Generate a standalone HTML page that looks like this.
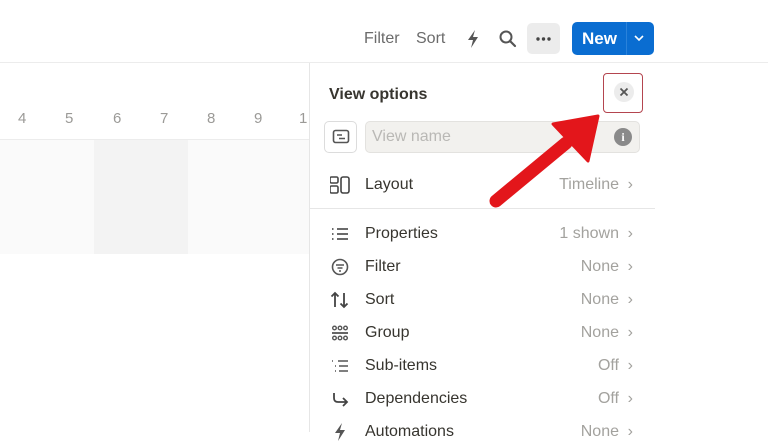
<!DOCTYPE html>
<html><head><meta charset="utf-8"><style>
*{margin:0;padding:0;box-sizing:border-box}
body{width:768px;height:432px;overflow:hidden;background:#fff;font-family:"Liberation Sans",sans-serif;position:relative;color:#37352f}
.abs{position:absolute}
.tb{font-size:16px;color:#6b6b6b;top:30px}
.row{position:absolute;left:310px;width:345px;height:33px;font-size:16px}
.row .ic{position:absolute;left:20px;top:7px;width:20px;height:20px}
.row .lb{position:absolute;left:55px;top:8px;color:#37352f}
.row .vl{position:absolute;right:36px;top:8px;color:#a3a29e}
.row .ch{position:absolute;right:22px;top:8px;color:#a3a29e}
</style></head><body>
<div class="abs" style="left:0;top:62px;width:768px;height:1px;background:#ececec"></div>
<div class="abs tb" style="left:364px">Filter</div>
<div class="abs tb" style="left:416px">Sort</div>
<svg class="abs" style="left:465px;top:29px" width="16" height="20" viewBox="0 0 16 20"><path d="M10 1 L3 11 H8 L6 19 L13 8 H8 Z" fill="#555"/></svg>
<svg class="abs" style="left:498px;top:29px" width="20" height="20" viewBox="0 0 20 20"><circle cx="8" cy="8" r="5.5" fill="none" stroke="#555" stroke-width="2"/><path d="M12 12 L17 17" stroke="#555" stroke-width="2.2" stroke-linecap="round"/></svg>
<div class="abs" style="left:527px;top:23px;width:33px;height:31px;background:#ececec;border-radius:5px"></div>
<svg class="abs" style="left:527px;top:23px" width="33" height="31"><circle cx="11" cy="16" r="1.7" fill="#444"/><circle cx="16.5" cy="16" r="1.7" fill="#444"/><circle cx="22" cy="16" r="1.7" fill="#444"/></svg>
<div class="abs" style="left:572px;top:22px;width:82px;height:33px;background:#0a6dd1;border-radius:5px"></div>
<div class="abs" style="left:626px;top:22px;width:1px;height:33px;background:#2a82da"></div>
<div class="abs" style="left:582px;top:29px;font-size:17px;font-weight:bold;color:#fff">New</div>
<svg class="abs" style="left:633px;top:33px" width="12" height="10" viewBox="0 0 12 10"><path d="M2 3 L6 7 L10 3" fill="none" stroke="#fff" stroke-width="1.6"/></svg>
<div class="abs" style="left:0;top:139px;width:309px;height:1px;background:#ececec"></div>
<div class="abs" style="left:0;top:140px;width:309px;height:114px;background:#fafafa"></div>
<div class="abs" style="left:94px;top:140px;width:94px;height:114px;background:#f3f3f3"></div>
<div class="abs" style="top:110px;left:0;font-size:15px;color:#9b9a97">
<span class="abs" style="left:18px">4</span><span class="abs" style="left:65px">5</span><span class="abs" style="left:113px">6</span><span class="abs" style="left:160px">7</span><span class="abs" style="left:207px">8</span><span class="abs" style="left:254px">9</span><span class="abs" style="left:299px">1</span></div>
<div class="abs" style="left:309px;top:63px;width:459px;height:369px;background:#fff;border-left:1px solid #e6e6e6"></div>
<div class="abs" style="left:329px;top:86px;font-size:16px;font-weight:bold;color:#37352f">View options</div>
<div class="abs" style="left:614px;top:82px;width:20px;height:20px;border-radius:50%;background:#ececec"></div>
<svg class="abs" style="left:618px;top:86px" width="12" height="12" viewBox="0 0 12 12"><path d="M2.5 2.5 L9.5 9.5 M9.5 2.5 L2.5 9.5" stroke="#555" stroke-width="1.8"/></svg>
<div class="abs" style="left:603px;top:73px;width:40px;height:40px;border:1.5px solid #b4454f;border-radius:4px"></div>
<div class="abs" style="left:324px;top:121px;width:33px;height:32px;border:1px solid #dcdcdc;border-radius:5px"></div>
<svg class="abs" style="left:332px;top:129px" width="18" height="16" viewBox="0 0 18 16"><rect x="1.5" y="1.5" width="15" height="12" rx="2" fill="none" stroke="#555" stroke-width="1.6"/><path d="M5 6 H10 M7 9.5 H13" stroke="#555" stroke-width="1.5"/></svg>
<div class="abs" style="left:365px;top:121px;width:275px;height:32px;background:#f2f1ee;border:1px solid #e3e2df;border-radius:5px"></div>
<div class="abs" style="left:372px;top:128px;font-size:16px;color:#b9b8b5">View name</div>
<div class="abs" style="left:614px;top:128px;width:18px;height:18px;border-radius:50%;background:#8a8a8a;color:#fff;font-size:12px;font-weight:bold;text-align:center;line-height:18px;font-family:'Liberation Serif',serif">i</div>
<div class="row" style="top:168px"><svg class="ic" viewBox="0 0 20 20"><rect x="0" y="2" width="8" height="6" rx="1.5" fill="none" stroke="#444" stroke-width="1.6"/><rect x="0" y="11" width="8" height="7" rx="1.5" fill="none" stroke="#444" stroke-width="1.6"/><rect x="11" y="2" width="8" height="16" rx="2" fill="none" stroke="#444" stroke-width="1.6"/></svg><span class="lb">Layout</span><span class="vl">Timeline</span><span class="ch">›</span></div>
<div class="abs" style="left:310px;top:208px;width:345px;height:1px;background:#e6e6e6"></div>
<div class="row" style="top:217px"><svg class="ic" viewBox="0 0 20 20"><path d="M2 5H3.5M2 10H3.5M2 15H3.5M7 5H18M7 10H18M7 15H18" stroke="#555" stroke-width="1.8"/></svg><span class="lb">Properties</span><span class="vl">1 shown</span><span class="ch">›</span></div>
<div class="row" style="top:250px"><svg class="ic" viewBox="0 0 20 20"><circle cx="10" cy="10" r="7.5" fill="none" stroke="#555" stroke-width="1.6"/><path d="M6 8H14M7.5 11H12.5M9 14H11" stroke="#555" stroke-width="1.5"/></svg><span class="lb">Filter</span><span class="vl">None</span><span class="ch">›</span></div>
<div class="row" style="top:283px"><svg class="ic" viewBox="0 0 20 20"><path d="M5 17V3M1.5 6.5L5 3L8.5 6.5M14 3V17M10.5 13.5L14 17L17.5 13.5" fill="none" stroke="#444" stroke-width="1.8"/></svg><span class="lb">Sort</span><span class="vl">None</span><span class="ch">›</span></div>
<div class="row" style="top:316px"><svg class="ic" viewBox="0 0 20 20" fill="none" stroke="#555" stroke-width="1.4"><circle cx="4.5" cy="5" r="1.8"/><circle cx="10" cy="5" r="1.8"/><circle cx="15.5" cy="5" r="1.8"/><path d="M2 10H18" stroke-width="1.8"/><circle cx="4.5" cy="15" r="1.8"/><circle cx="10" cy="15" r="1.8"/><circle cx="15.5" cy="15" r="1.8"/></svg><span class="lb">Group</span><span class="vl">None</span><span class="ch">›</span></div>
<div class="row" style="top:349px"><svg class="ic" viewBox="0 0 20 20"><path d="M2 5H3M5 10H6M5 15H6M8 5H18M9 10H18M9 15H18" stroke="#555" stroke-width="1.6"/></svg><span class="lb">Sub-items</span><span class="vl">Off</span><span class="ch">›</span></div>
<div class="row" style="top:382px"><svg class="ic" viewBox="0 0 20 20"><path d="M4 4V9Q4 13 8 13H17M13 9L17 13L13 17" fill="none" stroke="#444" stroke-width="1.8"/></svg><span class="lb">Dependencies</span><span class="vl">Off</span><span class="ch">›</span></div>
<div class="row" style="top:415px"><svg class="ic" viewBox="0 0 20 20"><path d="M12 1L5 11H10L8 19L15 8H10Z" fill="#555"/></svg><span class="lb">Automations</span><span class="vl">None</span><span class="ch">›</span></div>
<svg class="abs" style="left:0;top:0" width="768" height="432"><line x1="496" y1="201" x2="566" y2="143" stroke="#e3161b" stroke-width="13" stroke-linecap="round"/><polygon points="598,116 553,124 588,161" fill="#e3161b" stroke="#e3161b" stroke-width="3" stroke-linejoin="round"/></svg>
</body></html>
